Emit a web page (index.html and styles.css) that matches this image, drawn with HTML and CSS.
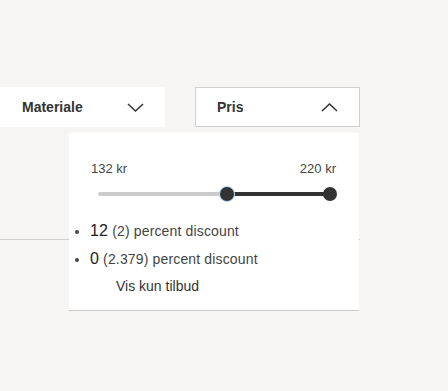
FILE: index.html
```html
<!DOCTYPE html>
<html lang="da">
<head>
    <meta charset="UTF-8">
    <title>Filtre</title>
    <link rel="stylesheet" href="styles.css">
</head>
<body>

<section class="filters">
    <button class="filter">
        <span>Materiale</span>
        <svg class="chevron" width="17" height="9" viewBox="0 0 17 9"><path d="M1 1 L8.5 8 L16 1" /></svg>
    </button>

    <div class="filter-wrap">
        <button class="filter filter--open">
            <span>Pris</span>
            <svg class="chevron" width="17" height="9" viewBox="0 0 17 9"><path d="M1 8 L8.5 1 L16 8" /></svg>
        </button>

        <!-- Price dropdown -->
        <div class="dropdown">
            <div class="range-labels">
                <span>132 kr</span>
                <span>220 kr</span>
            </div>
            <div class="slider">
                <div class="track"></div>
                <div class="track-active" style="left: 158px; width: 103px;"></div>
                <span class="thumb thumb--focus" style="left: 158px;"></span>
                <span class="thumb" style="left: 261px;"></span>
            </div>
            <ul class="discounts">
                <li><strong>12</strong> <small>(2)</small> percent discount</li>
                <li><strong>0</strong> <small>(2.379)</small> percent discount</li>
            </ul>
            <a class="offers" href="#">Vis kun tilbud</a>
        </div>
    </div>
</section>

<hr class="divider">

</body>
</html>
```

FILE: styles.css
```css
* {
    margin: 0;
    padding: 0;
    box-sizing: border-box;
}

body {
    font-family: 'Liberation Sans', Arial, sans-serif;
    background-color: #f6f5f3;
    color: #333;
    min-height: 100vh;
}

/* Filter bar */
.filters {
    display: flex;
    gap: 30px;
    padding-top: 87px;
}

.filter {
    display: flex;
    align-items: center;
    justify-content: space-between;
    width: 165px;
    height: 40px;
    padding: 0 21px 0 22px;
    background: #fff;
    border: none;
    font-family: inherit;
    font-size: 14px;
    font-weight: 700;
    color: #333;
}

.filter--open {
    border: 1px solid #cfcfcf;
    padding-left: 21px;
}

.chevron path {
    fill: none;
    stroke: #333;
    stroke-width: 1.5;
}

.filter-wrap {
    position: relative;
}

/* Dropdown panel */
.dropdown {
    position: absolute;
    top: 46px;
    left: -126px;
    width: 290px;
    height: 178px;
    background: #fff;
    border-bottom: 1px solid #c8c8c8;
    z-index: 2;
}

.range-labels {
    display: flex;
    justify-content: space-between;
    padding: 28px 23px 0 22px;
    font-size: 13px;
    line-height: 16px;
    color: #444;
}

.slider {
    position: relative;
    height: 14px;
    margin-top: 10px;
}

.track {
    position: absolute;
    top: 5px;
    left: 29px;
    width: 232px;
    height: 4px;
    border-radius: 2px;
    background: #cbcbcb;
}

.track-active {
    position: absolute;
    top: 5px;
    height: 4px;
    background: #333;
}

.thumb {
    position: absolute;
    top: 0;
    width: 14px;
    height: 14px;
    margin-left: -7px;
    border-radius: 50%;
    background: #333;
}

.thumb--focus {
    box-shadow: 0 0 0 1px #b8d8ee;
}

.discounts {
    margin-top: 16px;
    padding-left: 21px;
    font-size: 14px;
    line-height: 27px;
    letter-spacing: 0.15px;
    color: #444;
}

.discounts strong {
    font-size: 16px;
    font-weight: 400;
    color: #222;
}

.discounts small {
    font-size: 14px;
}

.offers {
    display: block;
    padding-left: 47px;
    font-size: 14px;
    line-height: 27px;
    color: #333;
    text-decoration: none;
}

/* Section divider */
.divider {
    width: 360px;
    margin-top: 112px;
    border: none;
    border-top: 1px solid #cfcfcf;
}
```
